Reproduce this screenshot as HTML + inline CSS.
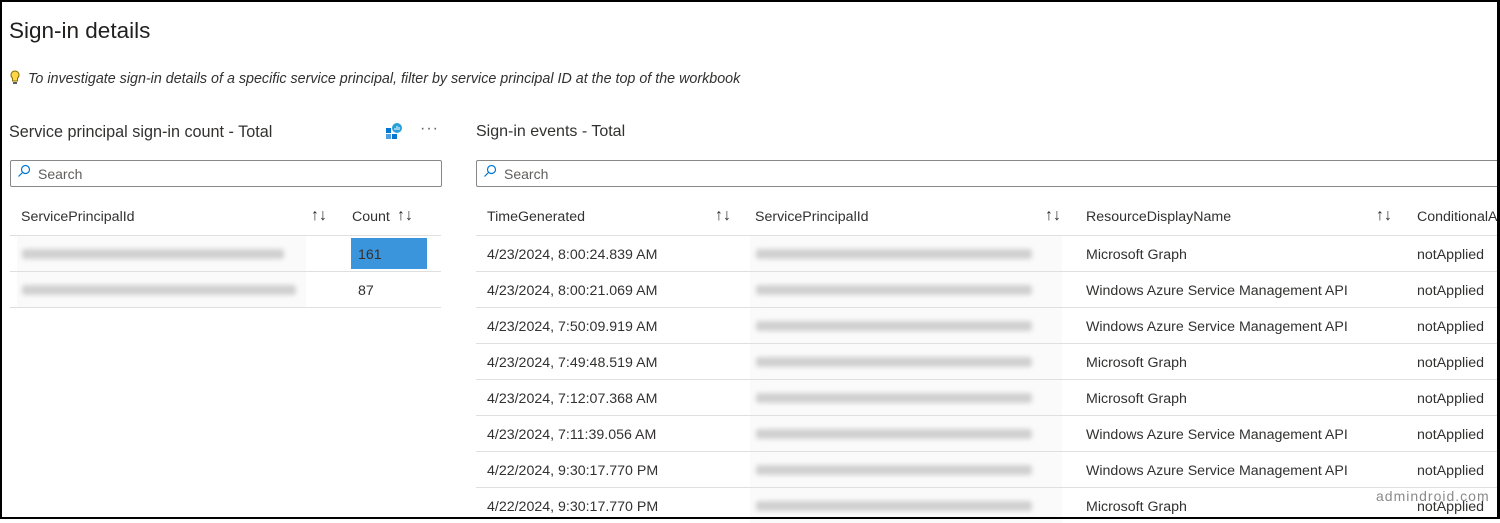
<!DOCTYPE html>
<html><head><meta charset="utf-8"><style>
*{margin:0;padding:0;box-sizing:border-box}
body{width:1500px;height:519px;overflow:hidden;background:#fff;font-family:"Liberation Sans",sans-serif;color:#323130;position:relative}
.frame{position:absolute;left:0;top:0;width:1500px;height:519px;border:2px solid #000;border-right-width:3px}
.a{position:absolute;white-space:nowrap}
.search{position:absolute;height:27px;border:1px solid #8a8886;border-radius:2px;font-size:14px;color:#605e5c;padding:5px 0 0 27px}
.line{position:absolute;height:1px;background:#e1dfdd}
.cell{position:absolute;font-size:14.2px;color:#323130;white-space:nowrap}
.hdr{position:absolute;font-size:14.2px;color:#323130;white-space:nowrap}
.ar{position:absolute;font-size:16px;color:#323130;white-space:nowrap}
.blur{position:absolute;height:10px;background:#d0d0d0;filter:blur(2.5px);border-radius:3px}
.wb{position:absolute;background:#f7f7f7}
</style></head><body>
<div class="a" style="left:9px;top:18px;font-size:22.5px;color:#201f1e">Sign-in details</div>
<svg class="a" style="left:10px;top:70px" width="10" height="16" viewBox="0 0 10 16"><path d="M5 1a4 4 0 0 0-2.5 7.1V11h5V8.1A4 4 0 0 0 5 1z" fill="#ffd54a" stroke="#8a6d00" stroke-width="1"/><rect x="3" y="12" width="4" height="2" fill="#605e5c"/></svg>
<div class="a" style="left:28px;top:71px;font-size:14.3px;font-style:italic;color:#323130">To investigate sign-in details of a specific service principal, filter by service principal ID at the top of the workbook</div>

<div class="a" style="left:9px;top:123px;font-size:16.2px;color:#323130">Service principal sign-in count - Total</div>
<svg class="a" style="left:385px;top:122px" width="18" height="18" viewBox="0 0 18 18"><rect x="1" y="6" width="5" height="5" fill="#0078d4"/><rect x="7" y="12" width="5" height="5" fill="#0078d4"/><rect x="1" y="12" width="5" height="5" fill="#50a0e0"/><circle cx="12" cy="6" r="5" fill="#2aa0d8"/><path d="M10 8V6M12 8V4M14 8V5" stroke="#fff" stroke-width="1"/></svg>
<div class="a" style="left:420px;top:120px;font-size:16px;color:#605e5c;letter-spacing:1px">···</div>
<div class="search" style="left:10px;top:160px;width:432px">Search</div>
<svg class="a" style="left:17px;top:164px" width="14" height="14" viewBox="0 0 14 14"><circle cx="8.5" cy="5.5" r="4" fill="none" stroke="#0078d4" stroke-width="1.2"/><path d="M5.5 8.5L1.5 12.5" stroke="#0078d4" stroke-width="1.2"/></svg>
<div class="hdr" style="left:21px;top:209px">ServicePrincipalId</div>
<div class="ar" style="left:311px;top:207px">↑↓</div>
<div class="hdr" style="left:352px;top:209px">Count</div>
<div class="ar" style="left:397px;top:207px">↑↓</div>
<div class="line" style="left:10px;top:235px;width:431px"></div>
<div class="line" style="left:10px;top:271px;width:431px"></div>
<div class="line" style="left:10px;top:307px;width:431px"></div>
<div class="wb" style="left:17px;top:236px;width:289px;height:35px;background:#fafafa"></div>
<div class="wb" style="left:17px;top:272px;width:289px;height:35px;background:#fafafa"></div>
<div class="blur" style="left:22px;top:249px;width:262px"></div>
<div class="blur" style="left:22px;top:285px;width:274px"></div>
<div class="a" style="left:351px;top:238px;width:76px;height:31px;background:#3b95dc"></div>
<div class="cell" style="left:358px;top:247px">161</div>
<div class="cell" style="left:358px;top:283px">87</div>

<div class="a" style="left:476px;top:123px;font-size:16px;color:#323130">Sign-in events - Total</div>
<div class="search" style="left:476px;top:160px;width:1030px">Search</div>
<svg class="a" style="left:483px;top:164px" width="14" height="14" viewBox="0 0 14 14"><circle cx="8.5" cy="5.5" r="4" fill="none" stroke="#0078d4" stroke-width="1.2"/><path d="M5.5 8.5L1.5 12.5" stroke="#0078d4" stroke-width="1.2"/></svg>
<div class="hdr" style="left:487px;top:209px">TimeGenerated</div>
<div class="ar" style="left:715px;top:207px">↑↓</div>
<div class="hdr" style="left:755px;top:209px">ServicePrincipalId</div>
<div class="ar" style="left:1045px;top:207px">↑↓</div>
<div class="hdr" style="left:1086px;top:209px">ResourceDisplayName</div>
<div class="ar" style="left:1376px;top:207px">↑↓</div>
<div class="hdr" style="left:1417px;top:209px">ConditionalA</div>
<div id="rows"></div>
<script>
var t=["4/23/2024, 8:00:24.839 AM","4/23/2024, 8:00:21.069 AM","4/23/2024, 7:50:09.919 AM","4/23/2024, 7:49:48.519 AM","4/23/2024, 7:12:07.368 AM","4/23/2024, 7:11:39.056 AM","4/22/2024, 9:30:17.770 PM","4/22/2024, 9:30:17.770 PM"];
var r=["Microsoft Graph","Windows Azure Service Management API","Windows Azure Service Management API","Microsoft Graph","Microsoft Graph","Windows Azure Service Management API","Windows Azure Service Management API","Microsoft Graph"];
var h="";
for(var i=0;i<8;i++){var y=236+i*36;
h+='<div class="line" style="left:476px;top:'+(y-1)+'px;width:1024px"></div>';
h+='<div class="wb" style="left:750px;top:'+y+'px;width:312px;height:35px;background:#fafafa"></div>';
h+='<div class="blur" style="left:756px;top:'+(y+13)+'px;width:276px"></div>';
h+='<div class="cell" style="left:487px;top:'+(y+11)+'px">'+t[i]+'</div>';
h+='<div class="cell" style="left:1086px;top:'+(y+11)+'px">'+r[i]+'</div>';
h+='<div class="cell" style="left:1417px;top:'+(y+11)+'px">notApplied</div>';}
document.getElementById('rows').innerHTML=h;
</script>
<div class="a" style="left:1376px;top:488px;font-size:14px;color:#8a8a8a;letter-spacing:1px">admindroid.com</div>
<div class="frame"></div>
</body></html>
